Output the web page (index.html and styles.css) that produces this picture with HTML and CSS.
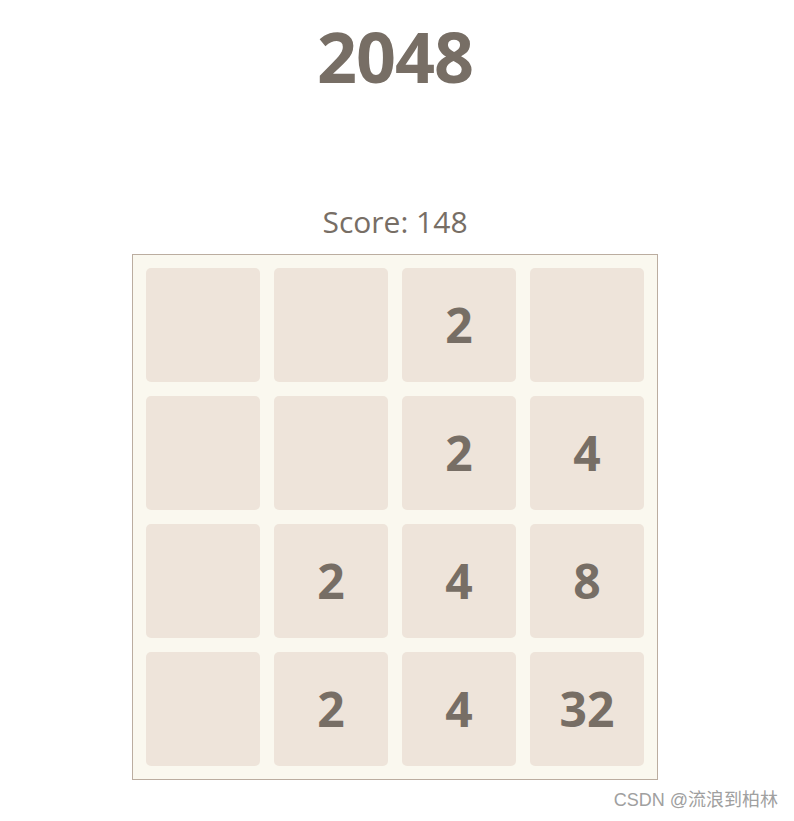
FILE: index.html
```html
<!DOCTYPE html>
<html lang="zh">
<head>
  <meta charset="UTF-8">
  <meta name="viewport" content="width=device-width, initial-scale=1.0">
  <title>2048</title>
  <link rel="stylesheet" href="styles.css">
</head>
<body>
  <div class="game">
    <h1 class="title">2048</h1>
    <div class="score">Score: 148</div>

    <div class="board">
      <div class="cell"></div>
      <div class="cell"></div>
      <div class="cell">2</div>
      <div class="cell"></div>

      <div class="cell"></div>
      <div class="cell"></div>
      <div class="cell">2</div>
      <div class="cell">4</div>

      <div class="cell"></div>
      <div class="cell">2</div>
      <div class="cell">4</div>
      <div class="cell">8</div>

      <div class="cell"></div>
      <div class="cell">2</div>
      <div class="cell">4</div>
      <div class="cell">32</div>
    </div>
  </div>

  <div class="watermark">CSDN @流浪到柏林</div>
</body>
</html>
```

FILE: styles.css
```css
body {
  margin: 0;
  background: #fff;
  color: #776e65;
  font-family: "Open Sans", "Noto Sans CJK SC", sans-serif;
}

.game {
  width: 790px;
  display: flex;
  flex-direction: column;
  align-items: center;
}

.title {
  margin: 21px 0 0;
  font-size: 70px;
  line-height: 1;
  font-weight: 700;
  letter-spacing: -1px;
}

.score {
  margin-top: 116px;
  font-size: 30px;
  line-height: 1;
}

/* 4x4 grid: each track is a 114px tile plus 7px margin on both sides */
.board {
  margin-top: 17px;
  padding: 6px;
  border: 1px solid #bbada0;
  background: #faf8ef;
  display: grid;
  grid-template-columns: repeat(4, 128px);
  grid-auto-rows: 128px;
}

.cell {
  margin: 7px;
  border-radius: 5px;
  background: #eee4da;
  display: flex;
  align-items: center;
  justify-content: center;
  font-size: 48px;
  line-height: 1;
  font-weight: 700;
}

.watermark {
  position: absolute;
  right: 16px;
  top: 790px;
  font-family: "Liberation Sans", "Noto Sans CJK SC", sans-serif;
  font-size: 18px;
  line-height: 1.2;
  color: #a0a0a0;
}
```
